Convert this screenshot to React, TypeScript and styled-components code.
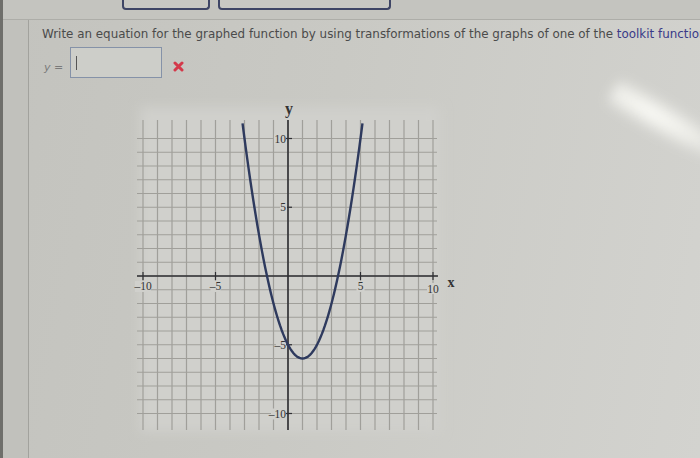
import React from "react";
import styled, { createGlobalStyle } from "styled-components";

const GlobalStyle = createGlobalStyle`
  html, body { margin: 0; padding: 0; }
  body { background: #c6c6c1; font-family: "DejaVu Sans", Verdana, sans-serif; }
`;

const Page = styled.div`
  position: relative;
  width: 697px;
  height: 458px;
  overflow: hidden;
  display: flex;
  flex-direction: column;
  border-left: 3px solid #6f6f6b;
  background: linear-gradient(100deg, #c3c3be 0%, #c9c9c4 45%, #d3d3cf 100%);
`;

const Header = styled.div`
  height: 19px;
  flex: none;
  display: flex;
  gap: 8px;
  padding-left: 119px;
  border-bottom: 1px solid #adada8;
  background: #c4c4bf;
`;

const Tab = styled.div<{ $w: number }>`
  width: ${(p) => p.$w}px;
  height: 10px;
  margin-top: -2px;
  border: 2px solid #3e4565;
  border-top: none;
  border-radius: 0 0 4px 4px;
  background: #c8c8c3;
`;

const Body = styled.div`
  flex: 1;
  display: flex;
  min-height: 0;
`;

const Side = styled.div`
  width: 25px;
  flex: none;
  background: #c1c1bc;
  border-right: 1px solid #a2a29d;
`;

const Content = styled.div`
  flex: 1;
  min-width: 0;
  padding: 7px 0 0 13px;
  overflow: hidden;
`;

const Question = styled.p`
  margin: 0;
  white-space: nowrap;
  font-size: 11.9px;
  line-height: 14px;
  color: #4b4b4b;
`;

const Link = styled.span`
  color: #3a3a88;
`;

const AnswerRow = styled.div`
  margin-top: 6px;
  display: flex;
  align-items: center;
  padding-left: 2px;
`;

const Label = styled.span`
  font-size: 11px;
  color: #7a7a7a;
  padding-top: 9px;
  width: 26px;
  i { font-style: italic; }
`;

const Input = styled.div`
  width: 85px;
  height: 29px;
  border: 1.5px solid #8592a8;
  background: #cdcec9;
  display: flex;
  align-items: center;
  padding-left: 5px;
  box-sizing: content-box;
`;

const Caret = styled.span`
  width: 1px;
  height: 14px;
  background: #555;
`;

const Cross = styled.svg`
  margin-left: 11px;
  margin-top: 8px;
`;

const Graph = styled.svg`
  display: block;
  margin: 19px 0 0 86px;
`;

const Glare = styled.div`
  position: absolute;
  left: 600px;
  top: 110px;
  width: 150px;
  height: 36px;
  transform: rotate(30deg);
  background: radial-gradient(ellipse at 30% 50%, rgba(255,255,250,0.95) 0%, rgba(255,255,250,0.6) 35%, rgba(255,255,250,0) 70%);
  filter: blur(6px);
  pointer-events: none;
`;

const X0 = 288;
const Y0 = 277;
const SX = 14.5;
const SY = 13.75;
const px = (u: number) => X0 + SX * u;
const py = (v: number) => Y0 - SY * v;

function curve() {
  const pts: string[] = [];
  const a = 1 - Math.sqrt(17.1);
  const b = 1 + Math.sqrt(17.1);
  const n = 80;
  for (let i = 0; i <= n; i++) {
    const x = a + ((b - a) * i) / n;
    const y = (x - 1) * (x - 1) - 6;
    pts.push(`${px(x).toFixed(2)},${py(y).toFixed(2)}`);
  }
  return pts.join(" ");
}

const range = Array.from({ length: 21 }, (_, i) => i - 10);
const BG = "#d0d0cc";

export default function App() {
  const gridTop = 121;
  const gridBottom = 431;
  const gridLeft = 137;
  const gridRight = 437;
  return (
    <>
      <GlobalStyle />
      <Page>
        <Header>
          <Tab $w={84} />
          <Tab $w={169} />
        </Header>
        <Body>
          <Side />
          <Content>
            <Question>
              Write an equation for the graphed function by using transformations of the graphs of one of the{" "}
              <Link>toolkit functions</Link>.
            </Question>
            <AnswerRow>
              <Label>
                <i>y</i> =
              </Label>
              <Input>
                <Caret />
              </Input>
              <Cross width="11" height="11" viewBox="0 0 11 11">
                <path d="M2 2 L9 9 M9 2 L2 9" stroke="#d4394a" strokeWidth="3" strokeLinecap="round" />
              </Cross>
            </AnswerRow>
            <Graph width="340" height="345" viewBox="128 98 340 345">
              <defs>
                <filter id="soft" x="-20%" y="-20%" width="140%" height="140%">
                  <feGaussianBlur stdDeviation="6" />
                </filter>
              </defs>
              <rect x="140" y="108" width="300" height="325" fill={BG} filter="url(#soft)" />
              {range.map((u) => (
                <line key={`v${u}`} x1={px(u)} x2={px(u)} y1={gridTop} y2={gridBottom} stroke="#a09f9a" strokeWidth="1.2" />
              ))}
              {range.map((v) => (
                <line key={`h${v}`} x1={gridLeft} x2={gridRight} y1={py(v)} y2={py(v)} stroke="#a09f9a" strokeWidth="1.2" />
              ))}
              <line x1={gridLeft} x2={gridRight + 1} y1={Y0} y2={Y0} stroke="#2f2f33" strokeWidth="1.6" />
              <line x1={X0} x2={X0} y1={gridTop} y2={gridBottom} stroke="#2f2f33" strokeWidth="1.6" />
              {[-10, -5, 5, 10].map((u) => (
                <line key={`tx${u}`} x1={px(u)} x2={px(u)} y1={Y0 - 4} y2={Y0 + 4} stroke="#2f2f33" strokeWidth="1.2" />
              ))}
              {[-10, -5, 5, 10].map((v) => (
                <line key={`ty${v}`} x1={X0 - 4} x2={X0 + 4} y1={py(v)} y2={py(v)} stroke="#2f2f33" strokeWidth="1.2" />
              ))}
              <g fontFamily="'Liberation Serif', 'DejaVu Serif', serif" fontSize="11.5" fill="#333">
                <rect x={px(-10) - 8} y={Y0 + 5} width="16" height="11" fill={BG} />
                <text x={px(-10)} y={Y0 + 14} textAnchor="middle">–10</text>
                <rect x={px(-5) - 5} y={Y0 + 5} width="10" height="11" fill={BG} />
                <text x={px(-5)} y={Y0 + 14} textAnchor="middle">–5</text>
                <rect x={px(5) - 4} y={Y0 + 5} width="8" height="11" fill={BG} />
                <text x={px(5)} y={Y0 + 14} textAnchor="middle">5</text>
                <rect x={px(10) - 6} y={Y0 + 7} width="12" height="11" fill={BG} />
                <text x={px(10)} y={Y0 + 17} textAnchor="middle">10</text>
                <rect x={X0 - 14} y={py(10) - 5} width="12" height="11" fill={BG} />
                <text x={X0 - 2} y={py(10) + 4} textAnchor="end">10</text>
                <rect x={X0 - 8} y={py(5) - 5} width="7" height="11" fill={BG} />
                <text x={X0 - 2} y={py(5) + 4} textAnchor="end">5</text>
                <rect x={X0 - 12} y={py(-5) - 5} width="10" height="11" fill={BG} />
                <text x={X0 - 2} y={py(-5) + 4} textAnchor="end">–5</text>
                <rect x={X0 - 17} y={py(-10) - 5} width="15" height="11" fill={BG} />
                <text x={X0 - 2} y={py(-10) + 4} textAnchor="end">–10</text>
              </g>
              <g fontFamily="'Liberation Serif', 'DejaVu Serif', serif" fontWeight="bold" fill="#333">
                <text x={X0 + 1} y={115} fontSize="16" textAnchor="middle">y</text>
                <text x={451} y={288} fontSize="14" textAnchor="middle">x</text>
              </g>
              <polyline points={curve()} fill="none" stroke="#2e3a5e" strokeWidth="2.4" strokeLinejoin="round" />
            </Graph>
          </Content>
        </Body>
        <Glare />
      </Page>
    </>
  );
}
